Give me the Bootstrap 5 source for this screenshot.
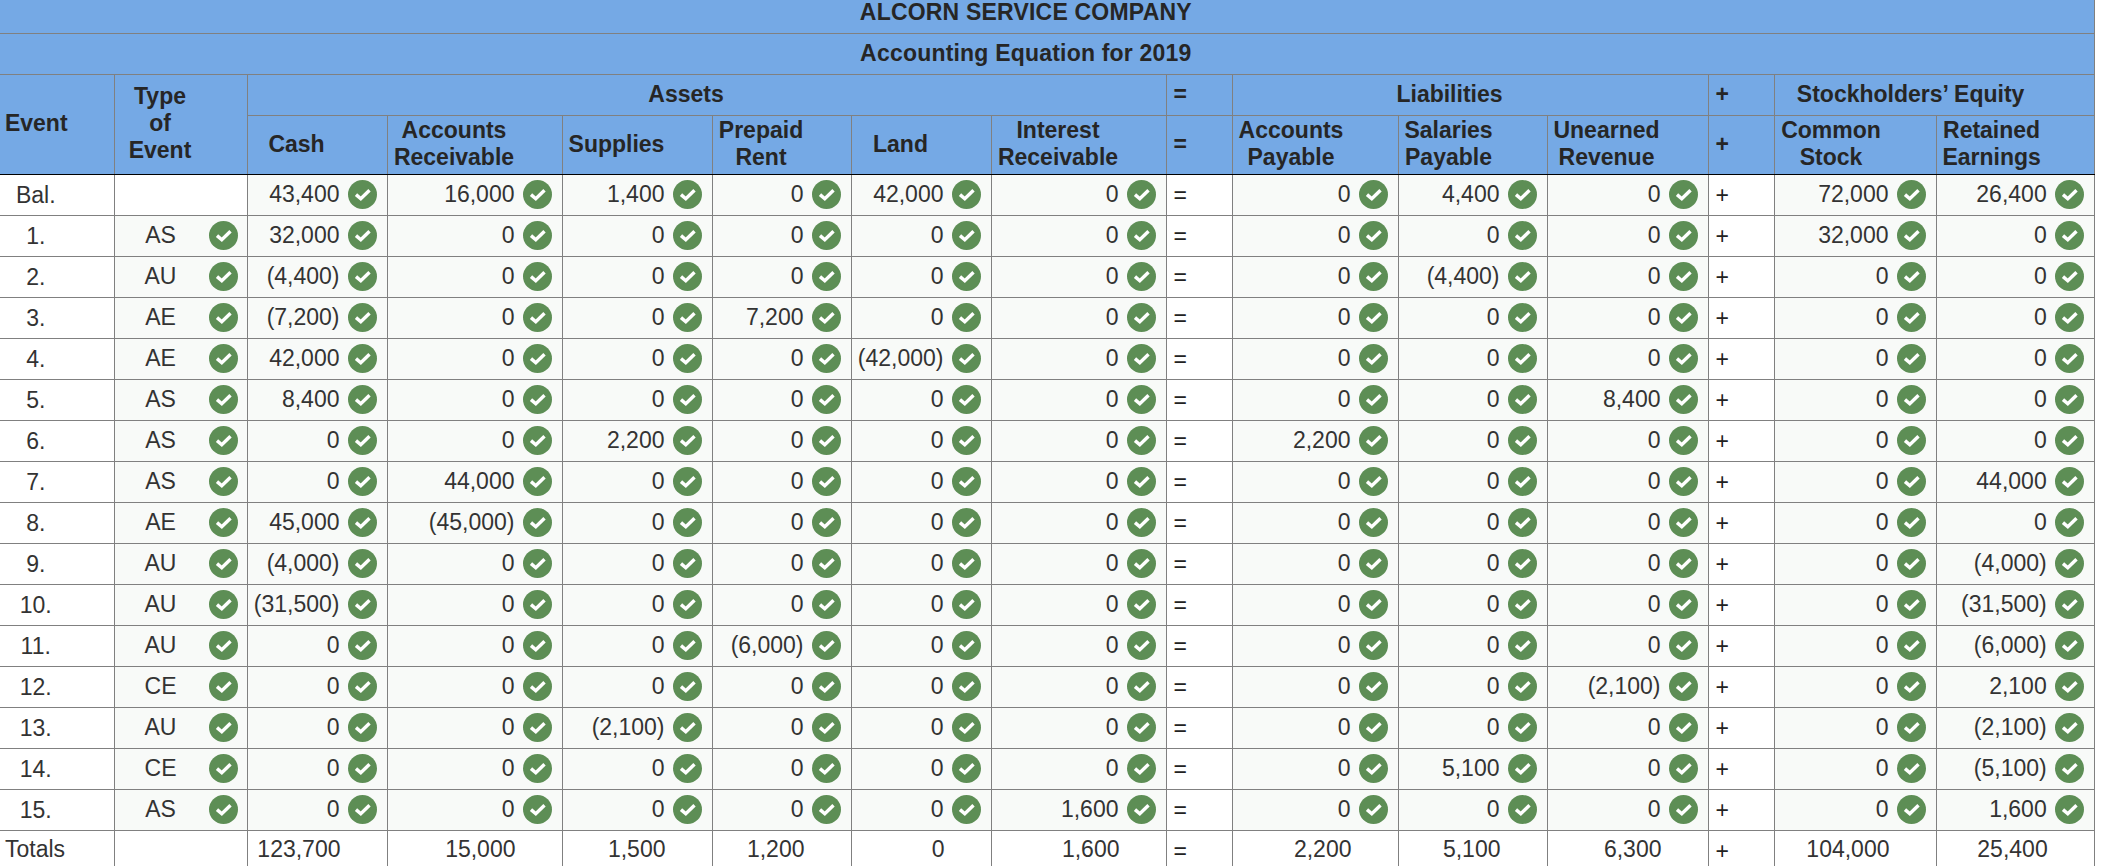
<!doctype html>
<html lang="en">
<head>
<meta charset="utf-8">
<title>Alcorn Service Company</title>
<link rel="stylesheet" href="https://cdn.jsdelivr.net/npm/bootstrap@5.3.0/dist/css/bootstrap.min.css">
<style>
html,body{background:#fff;overflow:hidden;height:866px}
.sheet{margin-top:-8px;width:2094px}
.eqt{table-layout:fixed;width:2094px;margin:0;border-collapse:collapse;font:400 23px/27px "Liberation Sans",Arial,sans-serif;color:#333}
.eqt th,.eqt td{border:1px solid #808080;padding:0;height:41px;vertical-align:middle;box-shadow:none}
.eqt th{background:#75a9e5;color:#262626;font-weight:700;text-align:center;padding:0 41px 2px 0}
.eqt th.ttl{letter-spacing:.2px;padding-right:42px}
.eqt th.sub2{padding-right:48px}
.eqt th.sub3{padding-right:42px}
.eqt th.sub4{padding-right:47px}
.eqt td{background:#f8faf8;color:#333;text-align:right;padding:2px 10px 0 0}
.eqt svg{width:29px;height:29px;margin-left:8px;vertical-align:middle;position:relative;top:-2px}
.eqt tr>:first-child{border-left:0}
.eqt thead tr.hsub th{border-top-color:#000}
.eqt thead tr.hlast th,.eqt thead th.hlast{border-bottom-color:#000}
.eqt th.op{text-align:left;padding:0 0 2px 7px}
.eqt thead tr.hsub th.op{border-top-color:#808080}
.eqt tr.hsub th{height:59px}
.eqt td.op{background:#fff;color:#222;text-align:left;padding:0 0 0 7px}
.eqt td.lbl{background:#fff;text-align:center;padding:0 42px 0 0}
.eqt td.blank{background:#fff}
.eqt td.typ{text-align:left;padding:2px 0 0}
.eqt td.typ span{display:inline-block;width:92px;text-align:center}
.eqt td.typ svg{margin-left:2px}
.eqt tr.tot td{background:#fff;height:44px;padding:0 46px 7px 0;border-top-color:#000}
.eqt tr.tot td.lbl{text-align:left;padding:0 0 7px 5px;border-top-color:#808080}
.eqt tr.tot td.blank{border-top-color:#808080;padding:0}
.eqt tr.tot td.op{padding:0 0 3px 7px}
.c1{width:114px}.c2{width:133px}.c3{width:140px}.c4{width:175px}.c5{width:150px}.c6{width:139px}.c7{width:140px}.c8{width:175px}.c9{width:66px}.c10{width:166px}.c11{width:149px}.c12{width:161px}.c13{width:66px}.c14{width:162px}.c15{width:158px}
</style>
</head>
<body>
<svg class="d-none"><symbol id="k" viewBox="0 0 29 29"><circle cx="14.5" cy="14.5" r="14.5" fill="#5d8e55"/><path d="M8 14.6l4.8 4.2L21.5 10.3" fill="none" stroke="#fff" stroke-width="3.4"/></symbol></svg>
<div class="sheet">
<table class="table eqt">
<colgroup><col class="c1"><col class="c2"><col class="c3"><col class="c4"><col class="c5"><col class="c6"><col class="c7"><col class="c8"><col class="c9"><col class="c10"><col class="c11"><col class="c12"><col class="c13"><col class="c14"><col class="c15"></colgroup>
<thead>
<tr><th colspan="15" class="ttl">ALCORN SERVICE COMPANY</th></tr>
<tr><th colspan="15" class="ttl">Accounting Equation for 2019</th></tr>
<tr><th rowspan="2" class="hlast">Event</th><th rowspan="2" class="hlast">Type<br>of<br>Event</th><th colspan="6">Assets</th><th class="op">=</th><th colspan="3">Liabilities</th><th class="op">+</th><th colspan="2" class="sub4">Stockholders’ Equity</th></tr>
<tr class="hsub hlast"><th>Cash</th><th>Accounts<br>Receivable</th><th>Supplies</th><th>Prepaid<br>Rent</th><th>Land</th><th>Interest<br>Receivable</th><th class="op">=</th><th class="sub2">Accounts<br>Payable</th><th class="sub2">Salaries<br>Payable</th><th class="sub3">Unearned<br>Revenue</th><th class="op">+</th><th class="sub2">Common<br>Stock</th><th class="sub4">Retained<br>Earnings</th></tr>
</thead>
<tbody>
<tr><td class="lbl">Bal.</td><td class="blank"></td><td>43,400<svg><use href="#k"/></svg></td><td>16,000<svg><use href="#k"/></svg></td><td>1,400<svg><use href="#k"/></svg></td><td>0<svg><use href="#k"/></svg></td><td>42,000<svg><use href="#k"/></svg></td><td>0<svg><use href="#k"/></svg></td><td class="op">=</td><td>0<svg><use href="#k"/></svg></td><td>4,400<svg><use href="#k"/></svg></td><td>0<svg><use href="#k"/></svg></td><td class="op">+</td><td>72,000<svg><use href="#k"/></svg></td><td>26,400<svg><use href="#k"/></svg></td></tr>
<tr><td class="lbl">1.</td><td class="typ"><span>AS</span><svg><use href="#k"/></svg></td><td>32,000<svg><use href="#k"/></svg></td><td>0<svg><use href="#k"/></svg></td><td>0<svg><use href="#k"/></svg></td><td>0<svg><use href="#k"/></svg></td><td>0<svg><use href="#k"/></svg></td><td>0<svg><use href="#k"/></svg></td><td class="op">=</td><td>0<svg><use href="#k"/></svg></td><td>0<svg><use href="#k"/></svg></td><td>0<svg><use href="#k"/></svg></td><td class="op">+</td><td>32,000<svg><use href="#k"/></svg></td><td>0<svg><use href="#k"/></svg></td></tr>
<tr><td class="lbl">2.</td><td class="typ"><span>AU</span><svg><use href="#k"/></svg></td><td>(4,400)<svg><use href="#k"/></svg></td><td>0<svg><use href="#k"/></svg></td><td>0<svg><use href="#k"/></svg></td><td>0<svg><use href="#k"/></svg></td><td>0<svg><use href="#k"/></svg></td><td>0<svg><use href="#k"/></svg></td><td class="op">=</td><td>0<svg><use href="#k"/></svg></td><td>(4,400)<svg><use href="#k"/></svg></td><td>0<svg><use href="#k"/></svg></td><td class="op">+</td><td>0<svg><use href="#k"/></svg></td><td>0<svg><use href="#k"/></svg></td></tr>
<tr><td class="lbl">3.</td><td class="typ"><span>AE</span><svg><use href="#k"/></svg></td><td>(7,200)<svg><use href="#k"/></svg></td><td>0<svg><use href="#k"/></svg></td><td>0<svg><use href="#k"/></svg></td><td>7,200<svg><use href="#k"/></svg></td><td>0<svg><use href="#k"/></svg></td><td>0<svg><use href="#k"/></svg></td><td class="op">=</td><td>0<svg><use href="#k"/></svg></td><td>0<svg><use href="#k"/></svg></td><td>0<svg><use href="#k"/></svg></td><td class="op">+</td><td>0<svg><use href="#k"/></svg></td><td>0<svg><use href="#k"/></svg></td></tr>
<tr><td class="lbl">4.</td><td class="typ"><span>AE</span><svg><use href="#k"/></svg></td><td>42,000<svg><use href="#k"/></svg></td><td>0<svg><use href="#k"/></svg></td><td>0<svg><use href="#k"/></svg></td><td>0<svg><use href="#k"/></svg></td><td>(42,000)<svg><use href="#k"/></svg></td><td>0<svg><use href="#k"/></svg></td><td class="op">=</td><td>0<svg><use href="#k"/></svg></td><td>0<svg><use href="#k"/></svg></td><td>0<svg><use href="#k"/></svg></td><td class="op">+</td><td>0<svg><use href="#k"/></svg></td><td>0<svg><use href="#k"/></svg></td></tr>
<tr><td class="lbl">5.</td><td class="typ"><span>AS</span><svg><use href="#k"/></svg></td><td>8,400<svg><use href="#k"/></svg></td><td>0<svg><use href="#k"/></svg></td><td>0<svg><use href="#k"/></svg></td><td>0<svg><use href="#k"/></svg></td><td>0<svg><use href="#k"/></svg></td><td>0<svg><use href="#k"/></svg></td><td class="op">=</td><td>0<svg><use href="#k"/></svg></td><td>0<svg><use href="#k"/></svg></td><td>8,400<svg><use href="#k"/></svg></td><td class="op">+</td><td>0<svg><use href="#k"/></svg></td><td>0<svg><use href="#k"/></svg></td></tr>
<tr><td class="lbl">6.</td><td class="typ"><span>AS</span><svg><use href="#k"/></svg></td><td>0<svg><use href="#k"/></svg></td><td>0<svg><use href="#k"/></svg></td><td>2,200<svg><use href="#k"/></svg></td><td>0<svg><use href="#k"/></svg></td><td>0<svg><use href="#k"/></svg></td><td>0<svg><use href="#k"/></svg></td><td class="op">=</td><td>2,200<svg><use href="#k"/></svg></td><td>0<svg><use href="#k"/></svg></td><td>0<svg><use href="#k"/></svg></td><td class="op">+</td><td>0<svg><use href="#k"/></svg></td><td>0<svg><use href="#k"/></svg></td></tr>
<tr><td class="lbl">7.</td><td class="typ"><span>AS</span><svg><use href="#k"/></svg></td><td>0<svg><use href="#k"/></svg></td><td>44,000<svg><use href="#k"/></svg></td><td>0<svg><use href="#k"/></svg></td><td>0<svg><use href="#k"/></svg></td><td>0<svg><use href="#k"/></svg></td><td>0<svg><use href="#k"/></svg></td><td class="op">=</td><td>0<svg><use href="#k"/></svg></td><td>0<svg><use href="#k"/></svg></td><td>0<svg><use href="#k"/></svg></td><td class="op">+</td><td>0<svg><use href="#k"/></svg></td><td>44,000<svg><use href="#k"/></svg></td></tr>
<tr><td class="lbl">8.</td><td class="typ"><span>AE</span><svg><use href="#k"/></svg></td><td>45,000<svg><use href="#k"/></svg></td><td>(45,000)<svg><use href="#k"/></svg></td><td>0<svg><use href="#k"/></svg></td><td>0<svg><use href="#k"/></svg></td><td>0<svg><use href="#k"/></svg></td><td>0<svg><use href="#k"/></svg></td><td class="op">=</td><td>0<svg><use href="#k"/></svg></td><td>0<svg><use href="#k"/></svg></td><td>0<svg><use href="#k"/></svg></td><td class="op">+</td><td>0<svg><use href="#k"/></svg></td><td>0<svg><use href="#k"/></svg></td></tr>
<tr><td class="lbl">9.</td><td class="typ"><span>AU</span><svg><use href="#k"/></svg></td><td>(4,000)<svg><use href="#k"/></svg></td><td>0<svg><use href="#k"/></svg></td><td>0<svg><use href="#k"/></svg></td><td>0<svg><use href="#k"/></svg></td><td>0<svg><use href="#k"/></svg></td><td>0<svg><use href="#k"/></svg></td><td class="op">=</td><td>0<svg><use href="#k"/></svg></td><td>0<svg><use href="#k"/></svg></td><td>0<svg><use href="#k"/></svg></td><td class="op">+</td><td>0<svg><use href="#k"/></svg></td><td>(4,000)<svg><use href="#k"/></svg></td></tr>
<tr><td class="lbl">10.</td><td class="typ"><span>AU</span><svg><use href="#k"/></svg></td><td>(31,500)<svg><use href="#k"/></svg></td><td>0<svg><use href="#k"/></svg></td><td>0<svg><use href="#k"/></svg></td><td>0<svg><use href="#k"/></svg></td><td>0<svg><use href="#k"/></svg></td><td>0<svg><use href="#k"/></svg></td><td class="op">=</td><td>0<svg><use href="#k"/></svg></td><td>0<svg><use href="#k"/></svg></td><td>0<svg><use href="#k"/></svg></td><td class="op">+</td><td>0<svg><use href="#k"/></svg></td><td>(31,500)<svg><use href="#k"/></svg></td></tr>
<tr><td class="lbl">11.</td><td class="typ"><span>AU</span><svg><use href="#k"/></svg></td><td>0<svg><use href="#k"/></svg></td><td>0<svg><use href="#k"/></svg></td><td>0<svg><use href="#k"/></svg></td><td>(6,000)<svg><use href="#k"/></svg></td><td>0<svg><use href="#k"/></svg></td><td>0<svg><use href="#k"/></svg></td><td class="op">=</td><td>0<svg><use href="#k"/></svg></td><td>0<svg><use href="#k"/></svg></td><td>0<svg><use href="#k"/></svg></td><td class="op">+</td><td>0<svg><use href="#k"/></svg></td><td>(6,000)<svg><use href="#k"/></svg></td></tr>
<tr><td class="lbl">12.</td><td class="typ"><span>CE</span><svg><use href="#k"/></svg></td><td>0<svg><use href="#k"/></svg></td><td>0<svg><use href="#k"/></svg></td><td>0<svg><use href="#k"/></svg></td><td>0<svg><use href="#k"/></svg></td><td>0<svg><use href="#k"/></svg></td><td>0<svg><use href="#k"/></svg></td><td class="op">=</td><td>0<svg><use href="#k"/></svg></td><td>0<svg><use href="#k"/></svg></td><td>(2,100)<svg><use href="#k"/></svg></td><td class="op">+</td><td>0<svg><use href="#k"/></svg></td><td>2,100<svg><use href="#k"/></svg></td></tr>
<tr><td class="lbl">13.</td><td class="typ"><span>AU</span><svg><use href="#k"/></svg></td><td>0<svg><use href="#k"/></svg></td><td>0<svg><use href="#k"/></svg></td><td>(2,100)<svg><use href="#k"/></svg></td><td>0<svg><use href="#k"/></svg></td><td>0<svg><use href="#k"/></svg></td><td>0<svg><use href="#k"/></svg></td><td class="op">=</td><td>0<svg><use href="#k"/></svg></td><td>0<svg><use href="#k"/></svg></td><td>0<svg><use href="#k"/></svg></td><td class="op">+</td><td>0<svg><use href="#k"/></svg></td><td>(2,100)<svg><use href="#k"/></svg></td></tr>
<tr><td class="lbl">14.</td><td class="typ"><span>CE</span><svg><use href="#k"/></svg></td><td>0<svg><use href="#k"/></svg></td><td>0<svg><use href="#k"/></svg></td><td>0<svg><use href="#k"/></svg></td><td>0<svg><use href="#k"/></svg></td><td>0<svg><use href="#k"/></svg></td><td>0<svg><use href="#k"/></svg></td><td class="op">=</td><td>0<svg><use href="#k"/></svg></td><td>5,100<svg><use href="#k"/></svg></td><td>0<svg><use href="#k"/></svg></td><td class="op">+</td><td>0<svg><use href="#k"/></svg></td><td>(5,100)<svg><use href="#k"/></svg></td></tr>
<tr><td class="lbl">15.</td><td class="typ"><span>AS</span><svg><use href="#k"/></svg></td><td>0<svg><use href="#k"/></svg></td><td>0<svg><use href="#k"/></svg></td><td>0<svg><use href="#k"/></svg></td><td>0<svg><use href="#k"/></svg></td><td>0<svg><use href="#k"/></svg></td><td>1,600<svg><use href="#k"/></svg></td><td class="op">=</td><td>0<svg><use href="#k"/></svg></td><td>0<svg><use href="#k"/></svg></td><td>0<svg><use href="#k"/></svg></td><td class="op">+</td><td>0<svg><use href="#k"/></svg></td><td>1,600<svg><use href="#k"/></svg></td></tr>
<tr class="tot"><td class="lbl">Totals</td><td class="blank"></td><td>123,700</td><td>15,000</td><td>1,500</td><td>1,200</td><td>0</td><td>1,600</td><td class="op">=</td><td>2,200</td><td>5,100</td><td>6,300</td><td class="op">+</td><td>104,000</td><td>25,400</td></tr>
</tbody>
</table>
</div>
<script src="https://cdn.jsdelivr.net/npm/bootstrap@5.3.0/dist/js/bootstrap.bundle.min.js"></script>
</body>
</html>
